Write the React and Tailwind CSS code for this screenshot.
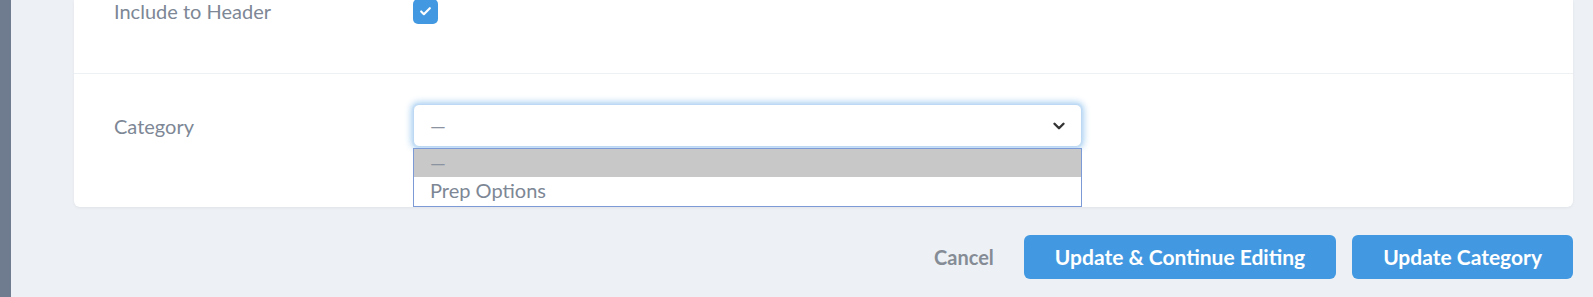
import { Check, ChevronDown } from "lucide-react"

const font = { fontFamily: "Lato, 'Open Sans', sans-serif" }

const App = () => {
  return (
    <div className="flex w-[1593px] h-[297px] overflow-hidden bg-[#edf1f5]" style={font}>
      {/* sidebar edge */}
      <div className="w-[11px] shrink-0 bg-[#6f7c90]" />

      <div className="flex-1 pl-[63px] pr-[20px]">
        {/* Card */}
        <div className="bg-white rounded-b-md shadow-[0_1px_3px_rgba(0,0,0,0.06)]">
          {/* Include to Header */}
          <div className="flex items-start h-[74px] border-b border-[#eef1f4] pl-[40px]">
            <div className="w-[299px] -mt-[1px] text-[20px] leading-[24px] text-[#7d8795]">Include to Header</div>
            <div className="w-[25px] h-[25px] -mt-[1px] rounded-[5px] bg-[#4299e1] flex items-center justify-center">
              <Check className="w-[13px] h-[13px] text-white" strokeWidth={4} />
            </div>
          </div>

          {/* Category */}
          <div className="flex items-start h-[133px] pt-[30px] pl-[40px]">
            <div className="w-[299px] pt-[10px] text-[20px] leading-[24px] text-[#7d8795]">Category</div>
            <div className="relative w-[669px]">
              <div className="h-[43px] flex items-center justify-between pl-[16px] pr-[13px] rounded-md border border-[#bcd8f3] bg-white shadow-[0_0_0_1px_#c7e0f7,0_0_6px_2px_rgba(66,153,225,0.45)]">
                <span className="text-[20px] text-[#8a939f] -mt-[2px]">—</span>
                <ChevronDown className="w-[18px] h-[18px] text-[#333]" strokeWidth={3.2} />
              </div>
              {/* open options list */}
              <div className="absolute left-0 top-[44px] w-full border border-[#7c9ad6] bg-white">
                <div className="h-[28px] flex items-center px-[16px] pb-[3px] bg-[#c8c8c8] text-[20px] text-[#8a939f]">—</div>
                <div className="h-[29px] flex items-center px-[16px] pb-[3px] text-[20px] text-[#7d8795]">Prep Options</div>
              </div>
            </div>
          </div>
        </div>

        {/* Actions */}
        <div className="flex justify-end items-center gap-[16px] mt-[28px]">
          <button className="mr-[14px] text-[20px] font-bold text-[#858c96]">Cancel</button>
          <button className="h-[44px] px-[31px] rounded-md bg-[#4299e1] text-white text-[21px] font-bold">
            Update &amp; Continue Editing
          </button>
          <button className="h-[44px] px-[31px] rounded-md bg-[#4299e1] text-white text-[21px] font-bold">
            Update Category
          </button>
        </div>
      </div>
    </div>
  )
}

export default App
